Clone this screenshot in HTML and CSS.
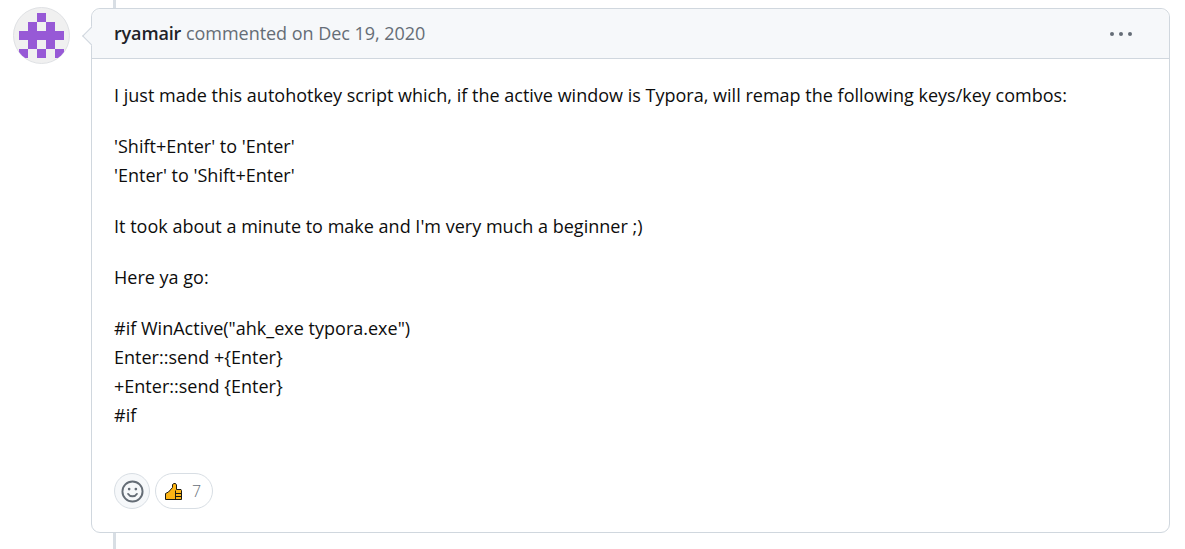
FILE: index.html
```html
<!DOCTYPE html>
<html lang="en">
<head>
    <meta charset="UTF-8">
    <meta name="viewport" content="width=device-width, initial-scale=1.0">
    <title>Comment</title>
    <link rel="stylesheet" href="styles.css">
</head>
<body>
    <div class="timeline">
        <div class="avatar">
            <svg viewBox="0 0 57 57" width="57" height="57">
                <defs>
                    <clipPath id="avatar-clip"><circle cx="28.5" cy="28.5" r="28"></circle></clipPath>
                </defs>
                <circle cx="28.5" cy="28.5" r="28" fill="#f0f0f0" stroke="#dfe1e4"></circle>
                <g clip-path="url(#avatar-clip)" fill="#9759d6">
                    <rect x="24" y="6" width="9" height="9"></rect>
                    <rect x="15" y="15" width="9" height="9"></rect>
                    <rect x="33" y="15" width="9" height="9"></rect>
                    <rect x="6" y="24" width="45" height="9"></rect>
                    <rect x="15" y="33" width="9" height="9"></rect>
                    <rect x="33" y="33" width="9" height="9"></rect>
                    <rect x="6" y="42" width="9" height="9"></rect>
                    <rect x="24" y="42" width="9" height="9"></rect>
                    <rect x="42" y="42" width="9" height="9"></rect>
                </g>
            </svg>
        </div>
        <div class="comment">
            <div class="comment-header">
                <div class="meta">
                    <span class="author">ryamair</span>
                    <span class="when">commented on Dec 19, 2020</span>
                </div>
                <div class="dots"><i></i><i></i><i></i></div>
            </div>
            <div class="comment-body">
                <p>I just made this autohotkey script which, if the active window is Typora, will remap the following keys/key combos:</p>
                <p>'Shift+Enter' to 'Enter'<br>'Enter' to 'Shift+Enter'</p>
                <p>It took about a minute to make and I'm very much a beginner ;)</p>
                <p>Here ya go:</p>
                <p>#if WinActive("ahk_exe typora.exe")<br>Enter::send +{Enter}<br>+Enter::send {Enter}<br>#if</p>
            </div>
            <div class="reactions">
                <button class="react-add">
                    <svg viewBox="0 0 24 24" width="23" height="23" fill="none" stroke="#656d76" stroke-width="2">
                        <circle cx="12" cy="12" r="10.500"></circle>
                        <path d="M7.500 14.500c1 1.600 2.600 2.500 4.500 2.500s3.500-.9 4.500-2.500" stroke-linecap="round"></path>
                        <circle cx="8.500" cy="9.500" r="1.400" fill="#656d76" stroke="none"></circle>
                        <circle cx="15.500" cy="9.500" r="1.400" fill="#656d76" stroke="none"></circle>
                    </svg>
                </button>
                <button class="react-pill">
                    <svg viewBox="0 0 17 17" width="17" height="17">
                        <path d="M.5 16.500v-6l3-1.500 4-4.500V1.500L9 .5h1.500l1 1.500v4.500h4.500l.5 1v9z" fill="#fdb515" stroke="#1d1a10"></path>
                        <path d="M10.500 7.500v9M10.500 10.500h6M10.500 13.500h6" fill="none" stroke="#1d1a10"></path>
                    </svg>
                    <span class="count">7</span>
                </button>
            </div>
        </div>
    </div>
</body>
</html>
```

FILE: styles.css
```css
body {
    margin: 0;
    background: #fff;
    font-family: "Open Sans", "Noto Sans", sans-serif;
    color: #1f2328;
}

.timeline {
    display: flex;
    align-items: flex-start;
    gap: 21px;
    padding: 7px 15px 16px 13px;
    position: relative;
    height: 526px;
}

.timeline::before {
    content: "";
    position: absolute;
    left: 113px;
    top: 0;
    bottom: 0;
    width: 3px;
    background: #d8dee4;
}

.avatar {
    flex: none;
    width: 57px;
    height: 57px;
}

.comment {
    flex: 1;
    position: relative;
    margin-top: 1px;
    height: 525px;
    box-sizing: border-box;
    display: flex;
    flex-direction: column;
    background: #fff;
    border: 1px solid #d0d7de;
    border-radius: 9px;
}

/* the little arrow pointing at the avatar */
.comment::before {
    content: "";
    position: absolute;
    left: -7px;
    top: 20px;
    width: 14px;
    height: 14px;
    box-sizing: border-box;
    background: #f6f8fa;
    border-left: 1px solid #d0d7de;
    border-bottom: 1px solid #d0d7de;
    transform: rotate(45deg);
}

.comment-header {
    display: flex;
    align-items: center;
    justify-content: space-between;
    height: 49px;
    padding: 0 37px 0 22px;
    background: #f6f8fa;
    border-bottom: 1px solid #d0d7de;
    border-radius: 9px 9px 0 0;
    font-size: 18px;
    position: relative;
}

.meta {
    padding-bottom: 2px;
}

.author {
    font-weight: 600;
    letter-spacing: -.15px;
}

.when {
    color: #656d76;
    letter-spacing: -.03px;
}

.dots {
    display: flex;
    gap: 5px;
}

.dots i {
    width: 4px;
    height: 4px;
    border-radius: 50%;
    background: #656d76;
}

.comment-body {
    flex: 1;
    padding: 22px 22px 0;
    font-size: 18px;
    line-height: 29px;
    letter-spacing: .01px;
    color: #0d0d0d;
}

.comment-body p {
    margin: 0 0 22px;
}

.reactions {
    display: flex;
    gap: 5px;
    padding: 0 22px 23px;
}

.reactions button {
    display: flex;
    align-items: center;
    height: 36px;
    padding: 0;
    font: inherit;
    background: #fff;
    border: 1px solid #d8dee4;
    border-radius: 18px;
}

.reactions .react-add {
    justify-content: center;
    width: 36px;
    background: #f6f8fa;
}

.reactions .react-pill {
    width: 58px;
    padding-left: 9px;
    gap: 10px;
}

.count {
    font-size: 16px;
    font-weight: 300;
    color: #656d76;
}
```
